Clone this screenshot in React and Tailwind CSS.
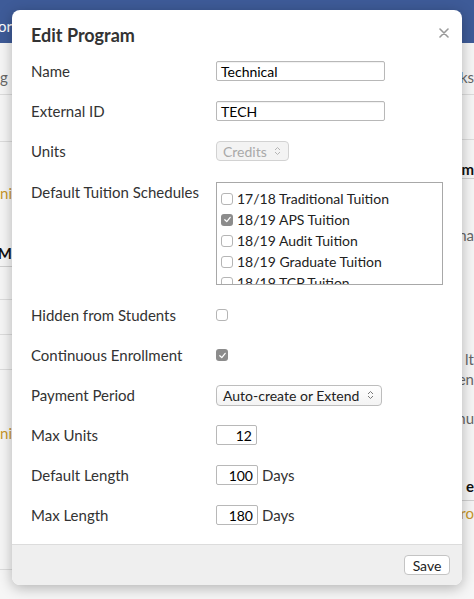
import React from "react";

const font = { fontFamily: "Lato, 'Open Sans', 'Liberation Sans', sans-serif" };

function Check({ checked }) {
  return checked ? (
    <span className="flex h-[12px] w-[12px] shrink-0 items-center justify-center rounded-[3px] bg-[#8c8c8c]">
      <svg width="9" height="9" viewBox="0 0 10 10">
        <path d="M2 5.2 L4.2 7.4 L8 2.6" fill="none" stroke="white" strokeWidth="1.4" strokeLinecap="round" strokeLinejoin="round" />
      </svg>
    </span>
  ) : (
    <span className="block h-[12px] w-[12px] shrink-0 rounded-[3px] border border-[#b5b5b5] bg-white" />
  );
}

function UpDown({ color = "#777" }) {
  return (
    <svg width="7" height="10" viewBox="0 0 7 10">
      <path d="M1 4 L3.5 1.5 L6 4" fill="none" stroke={color} strokeWidth="1" />
      <path d="M1 6 L3.5 8.5 L6 6" fill="none" stroke={color} strokeWidth="1" />
    </svg>
  );
}

function Row({ label, children, h = "h-[40px]", start = false }) {
  return (
    <div className={`flex ${h} ${start ? "items-start pt-[11px]" : "items-center"}`}>
      <div className={`w-[185px] shrink-0 text-[15px] leading-[20px] text-[#333]`}>{label}</div>
      <div className="flex items-center">{children}</div>
    </div>
  );
}

function TextInput({ value, w }) {
  return (
    <div className={`flex h-[20px] ${w} items-center rounded-[2px] border border-[#b8b8b8] bg-white px-[4px] text-[14px] text-black shadow-[inset_0_1px_1px_rgba(0,0,0,0.06)]`}>
      {value}
    </div>
  );
}

function NumInput({ value, w = "w-[42px]" }) {
  return (
    <div className={`flex h-[20px] ${w} items-center justify-end rounded-[2px] border border-[#b8b8b8] bg-white pr-[4px] text-[14px] text-black`}>
      {value}
    </div>
  );
}

const items = [
  ["17/18 Traditional Tuition", false],
  ["18/19 APS Tuition", true],
  ["18/19 Audit Tuition", false],
  ["18/19 Graduate Tuition", false],
  ["18/19 TCP Tuition", false],
];

export default function App() {
  return (
    <div className="relative h-[599px] w-[474px] overflow-hidden bg-[#f6f6f6]" style={font}>
      {/* Background page */}
      <div className="flex h-[43px] items-end justify-between bg-[#3e5b98] pb-[7px]">
        <div className="w-[12px] overflow-hidden whitespace-nowrap text-[15px] leading-[20px] text-white">
          <div className="flex justify-end">or</div>
        </div>
      </div>
      <div className="flex">
        <div className="w-[12px] overflow-hidden whitespace-nowrap text-[15px] leading-[20px]">
          <div className="h-[52px] border-b border-[#dcdcdc] pt-[24px] text-[#666]">
            <div className="flex justify-start">g</div>
          </div>
          <div className="h-[47px] border-b border-[#dcdcdc]" />
          <div className="h-[88px] pt-[41px] text-[#c9962a]">
            <div className="flex justify-end">ni</div>
          </div>
          <div className="h-[37px] border-b border-[#d0d0d0] pt-[13px] font-bold text-[#111]">
            <div className="flex justify-end">M</div>
          </div>
          <div className="h-[33px] border-b border-[#dcdcdc]" />
          <div className="h-[35px] border-b border-[#dcdcdc]" />
          <div className="h-[35px] border-b border-[#dcdcdc]" />
          <div className="h-[200px] border-b border-[#dcdcdc] pt-[53px] text-[#c9962a]">
            <div className="flex justify-end">ni</div>
          </div>
        </div>
        <div className="flex-1" />
        <div className="w-[12px] overflow-hidden whitespace-nowrap text-[15px] leading-[20px]">
          <div className="h-[52px] border-b border-[#dcdcdc] pt-[24px] text-[#666]">
            <div className="flex justify-end">ks</div>
          </div>
          <div className="h-[45px] border-b border-[#dcdcdc]" />
          <div className="h-[39px] border-b border-[#d0d0d0] pt-[19px] font-bold text-[#111]">
            <div className="flex justify-end">m</div>
          </div>
          <div className="h-[70px] pt-[46px] text-[#666]">
            <div className="flex justify-end">na</div>
          </div>
          <div className="h-[120px] pt-[100px] text-[#666]">
            <div className="flex justify-end">lt</div>
          </div>
          <div className="h-[39px] pt-[0px] text-[#666]">
            <div className="flex justify-end">en</div>
          </div>
          <div className="h-[68px] pt-[0px] text-[#666]">
            <div className="flex justify-end">nu</div>
          </div>
          <div className="h-[25px] border-b border-[#d0d0d0] font-bold text-[#111]">
            <div className="flex justify-end">e</div>
          </div>
          <div className="pt-[2px] text-[#c9962a]">
            <div className="flex justify-end">ro</div>
          </div>
        </div>
      </div>

      {/* Modal */}
      <div className="absolute left-[12px] top-[10px] flex h-[575px] w-[450px] flex-col overflow-hidden rounded-[8px] bg-white shadow-[0_3px_14px_rgba(0,0,0,0.28)]">
        <div className="flex h-[41px] items-end justify-between pb-[4px] pl-[19px] pr-[13px]">
          <div className="text-[18px] font-bold leading-[24px] text-[#333]">Edit Program</div>
          <svg width="10" height="10" viewBox="0 0 10 10" className="mb-[9px]">
            <path d="M1 1 L9 9 M9 1 L1 9" stroke="#9a9a9a" strokeWidth="1.6" strokeLinecap="round" />
          </svg>
        </div>
        <div className="flex-1 pl-[19px]">
          <Row label="Name">
            <TextInput value="Technical" w="w-[169px]" />
          </Row>
          <Row label="External ID">
            <TextInput value="TECH" w="w-[169px]" />
          </Row>
          <Row label="Units">
            <div className="flex h-[20px] w-[73px] items-center justify-between rounded-[4px] border border-[#d2d2d2] bg-[#f3f3f3] pl-[6px] pr-[7px] text-[14px] text-[#a9a9a9]">
              <span>Credits</span>
              <UpDown color="#b5b5b5" />
            </div>
          </Row>
          <Row label="Default Tuition Schedules" h="h-[124px]" start>
            <div className="h-[103px] w-[227px] overflow-hidden border border-[#a8a8a8] bg-white pl-[4px] pt-[5px]">
              {items.map(([t, c]) => (
                <div key={t} className="flex h-[21px] items-center gap-[4px] whitespace-nowrap text-[14px] text-[#222]">
                  <Check checked={c} />
                  <span>{t}</span>
                </div>
              ))}
            </div>
          </Row>
          <Row label="Hidden from Students">
            <Check checked={false} />
          </Row>
          <Row label="Continuous Enrollment">
            <Check checked={true} />
          </Row>
          <Row label="Payment Period">
            <div className="flex h-[21px] w-[166px] items-center justify-between rounded-[4px] border border-[#bdbdbd] bg-gradient-to-b from-white to-[#f3f3f3] pl-[6px] pr-[7px] text-[14px] text-[#222]">
              <span>Auto-create or Extend</span>
              <UpDown />
            </div>
          </Row>
          <Row label="Max Units">
            <NumInput value="12" w="w-[41px]" />
          </Row>
          <Row label="Default Length">
            <NumInput value="100" />
            <span className="ml-[4px] text-[15px] text-[#333]">Days</span>
          </Row>
          <Row label="Max Length">
            <NumInput value="180" />
            <span className="ml-[4px] text-[15px] text-[#333]">Days</span>
          </Row>
        </div>
        <div className="flex h-[41px] items-center justify-end border-t border-[#dcdcdc] bg-[#efefef] pr-[12px]">
          <div className="flex h-[20px] w-[46px] items-center justify-center rounded-[4px] border border-[#c4c4c4] bg-white text-[14px] text-[#222]">
            Save
          </div>
        </div>
      </div>
    </div>
  );
}
